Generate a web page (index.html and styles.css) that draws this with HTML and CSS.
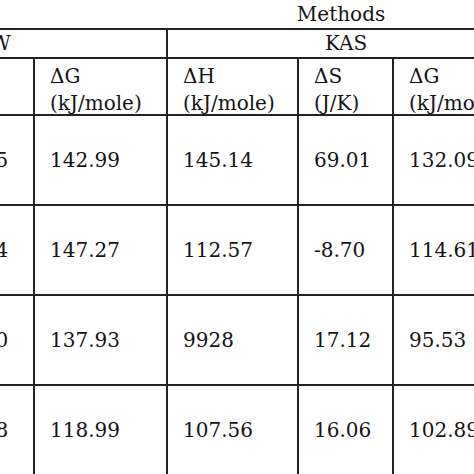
FILE: index.html
```html
<!DOCTYPE html>
<html>
<head>
<meta charset="utf-8">
<link rel="stylesheet" href="styles.css">
</head>
<body>
<div class="frame">
<table class="data">
  <caption class="methods">Methods</caption>
  <colgroup>
    <col class="c-h"><col class="c-s1"><col class="c-g1">
    <col class="c-h"><col class="c-s"><col class="c-g">
    <col class="c-h"><col class="c-s"><col class="c-g2">
  </colgroup>
  <thead>
    <tr class="r-method">
      <th colspan="3">OFW</th>
      <th colspan="3">KAS</th>
      <th colspan="3">Starink</th>
    </tr>
    <tr class="r-units">
      <th><span class="sym">ΔH</span><span class="unit">(kJ/mole)</span></th>
      <th><span class="sym">ΔS</span><span class="unit">(J/K)</span></th>
      <th><span class="sym">ΔG</span><span class="unit">(kJ/mole)</span></th>
      <th><span class="sym">ΔH</span><span class="unit">(kJ/mole)</span></th>
      <th><span class="sym">ΔS</span><span class="unit">(J/K)</span></th>
      <th><span class="sym">ΔG</span><span class="unit">(kJ/mole)</span></th>
      <th><span class="sym">ΔH</span><span class="unit">(kJ/mole)</span></th>
      <th><span class="sym">ΔS</span><span class="unit">(J/K)</span></th>
      <th><span class="sym">ΔG</span><span class="unit">(kJ/mole)</span></th>
    </tr>
  </thead>
  <tbody>
    <tr>
      <td>150.21</td><td>61.35</td><td>142.99</td>
      <td>145.14</td><td>69.01</td><td>132.09</td>
      <td>146.02</td><td>68.47</td><td>133.12</td>
    </tr>
    <tr>
      <td>110.36</td><td>68.24</td><td>147.27</td>
      <td>112.57</td><td>-8.70</td><td>114.61<b>1</b></td>
      <td>113.05</td><td>-8.52</td><td>115.08</td>
    </tr>
    <tr>
      <td>98.77</td><td>16.40</td><td>137.93</td>
      <td>9928</td><td>17.12</td><td>95.53</td>
      <td>99.61</td><td>17.04</td><td>96.10</td>
    </tr>
    <tr>
      <td>105.92</td><td>15.88</td><td>118.99</td>
      <td>107.56</td><td>16.06</td><td>102.89</td>
      <td>108.03</td><td>16.11</td><td>103.47</td>
    </tr>
  </tbody>
</table>
</div>
</body>
</html>
```

FILE: styles.css
```css
html, body {
  margin: 0;
  padding: 0;
  background: #ffffff;
}
body {
  width: 474px;
  height: 474px;
  overflow: hidden;
}
.frame {
  margin-left: -197px;
}
.data {
  table-layout: fixed;
  width: 1074px;
  border-collapse: collapse;
  font-family: "DejaVu Serif", serif;
  font-size: 20px;
  line-height: 27px;
  color: #141414;
}
.methods {
  caption-side: top;
  text-align: center;
  padding-top: 1px;
  height: 27px;
  font-weight: normal;
}
.c-h { width: 131px; }
.c-s1 { width: 99px; }
.c-s { width: 95px; }
.c-g1 { width: 133px; }
.c-g { width: 132px; }
.c-g2 { width: 127px; }
.data th,
.data td {
  border: 2px solid #222222;
  font-weight: normal;
  text-align: left;
  padding: 0 0 0 15px;
  white-space: nowrap;
  overflow: hidden;
}
.r-method th {
  text-align: center;
  height: 26px;
  padding: 0;
  vertical-align: middle;
}
.r-units th {
  height: 50px;
  vertical-align: top;
  padding-top: 4px;
}
.sym,
.unit {
  display: block;
}
.unit {
  margin-bottom: -3px;
}
.data td {
  height: 88px;
  vertical-align: middle;
}
.data td b {
  font-weight: bold;
}
```
